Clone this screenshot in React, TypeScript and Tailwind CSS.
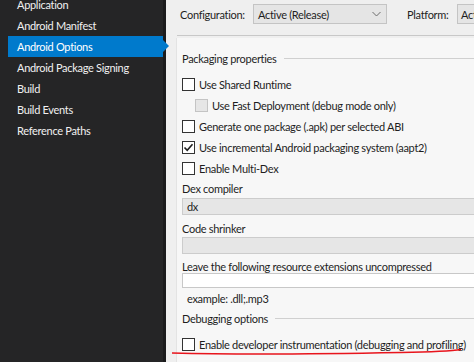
import React from "react";

const font = { fontFamily: 'Lato, "Noto Sans", sans-serif' };

function Check({ checked = false, disabled = false }: { checked?: boolean; disabled?: boolean }) {
  return (
    <span
      className={
        "relative inline-block w-[13px] h-[13px] shrink-0 border " +
        (disabled ? "border-[#c4c4c4] bg-[#e6e6e6]" : "border-[#333333] bg-white")
      }
    >
      {checked && (
        <svg viewBox="0 0 13 13" className="absolute -left-px -top-px w-[13px] h-[13px]">
          <path d="M2.5 6.5 L5.2 9.3 L10.5 3.2" fill="none" stroke="#1e1e1e" strokeWidth="1.6" />
        </svg>
      )}
    </span>
  );
}

function CheckRow({ label, checked, disabled, indent }: { label: string; checked?: boolean; disabled?: boolean; indent?: boolean }) {
  return (
    <div className={"flex items-center h-[21px] gap-[4px] whitespace-nowrap " + (indent ? "pl-[13px]" : "")}>
      <Check checked={checked} disabled={disabled} />
      <span className="text-[#1e1e1e]">{label}</span>
    </div>
  );
}

function Section({ label }: { label: string }) {
  return (
    <div className="flex items-center h-[18px] gap-[7px]">
      <span className="whitespace-nowrap">{label}</span>
      <div className="flex-1 h-px bg-[#d0d0d0]" />
    </div>
  );
}

const navItems = [
  "Application",
  "Android Manifest",
  "Android Options",
  "Android Package Signing",
  "Build",
  "Build Events",
  "Reference Paths",
];

export default function App() {
  return (
    <div className="w-[474px] h-[362px] overflow-hidden flex text-[11px] leading-none tracking-[-0.3px]" style={font}>
      {/* Sidebar */}
      <div className="w-[163px] shrink-0 bg-[#252526] flex flex-col pl-[8px] -mt-[6px] h-[368px]">
        {navItems.map((n) => {
          const sel = n === "Android Options";
          return (
            <div
              key={n}
              className={
                "relative h-[21px] flex items-center pl-[9px] whitespace-nowrap " +
                (sel ? "bg-[#007acc] text-white" : "text-[#f1f1f1]")
              }
            >
              {n}
              {sel && (
                <span className="absolute right-[-6px] top-[4px] w-0 h-0 border-y-[6px] border-y-transparent border-l-[6px] border-l-[#007acc]" />
              )}
            </div>
          );
        })}
      </div>
      <div className="w-[3px] shrink-0 bg-[#1b1b1c]" />
      {/* Main */}
      <div className="flex-1 bg-[#efefef] flex flex-col text-[#1e1e1e] min-w-0">
        {/* Header */}
        <div className="h-[38px] flex flex-col pl-[14px] pt-[4px]">
          <div className="flex items-center h-[20px] whitespace-nowrap">
            <span className="w-[73px]">Configuration:</span>
            <div className="w-[134px] h-[20px] border border-[#c4c4c4] bg-[#e5e5e5] flex items-center pl-[4px] pr-[5px]">
              <span className="flex-1">Active (Release)</span>
              <svg width="9" height="6" viewBox="0 0 9 6">
                <path d="M0.5 1 L4.5 5 L8.5 1" fill="none" stroke="#6d6d6d" strokeWidth="1" />
              </svg>
            </div>
            <span className="ml-[20px] w-[50px]">Platform:</span>
            <div className="flex-1 h-[20px] border border-r-0 border-[#c4c4c4] bg-[#e5e5e5] flex items-center pl-[3px] overflow-hidden">
              Active
            </div>
          </div>
          <div className="h-px bg-[#c8c8c8] mt-[11px] -ml-[3px]" />
        </div>
        {/* Panel */}
        <div className="flex-1 pl-[10px] relative">
          <div className="h-full bg-[#f7f7f7] border-l border-[#e3e3e3] pl-[5px] pt-[11px] flex flex-col">
            <Section label="Packaging properties" />
            <div className="mt-[7px]" />
            <CheckRow label="Use Shared Runtime" />
            <CheckRow label="Use Fast Deployment (debug mode only)" disabled indent />
            <CheckRow label="Generate one package (.apk) per selected ABI" />
            <CheckRow label="Use incremental Android packaging system (aapt2)" checked />
            <CheckRow label="Enable Multi-Dex" />
            <div className="h-[16px] flex items-center mt-[1px]">Dex compiler</div>
            <div className="mt-[2px] h-[17px] border border-r-0 border-[#cccccc] bg-[#e6e6e6] flex items-center pl-[4px]">dx</div>
            <div className="h-[16px] flex items-center mt-[5px]">Code shrinker</div>
            <div className="mt-[1px] h-[17px] border border-r-0 border-[#cccccc] bg-[#e6e6e6]" />
            <div className="h-[14px] flex items-center mt-[5px] whitespace-nowrap">Leave the following resource extensions uncompressed</div>
            <div className="h-[15px] border border-r-0 border-[#c8c8c8] bg-white" />
            <div className="h-[18px] flex items-center pl-[5px] mt-[1px]">example: .dll;.mp3</div>
            <div className="mt-[2px]">
              <Section label="Debugging options" />
            </div>
            <div className="mt-[7px]" />
            <CheckRow label="Enable developer instrumentation (debugging and profiling)" />
          </div>
          <svg className="absolute left-[5px] top-[309px]" width="292" height="10" viewBox="0 0 292 10">
            <path d="M1 6 C 60 7.5, 150 7, 230 5.5 C 260 5, 278 4.5, 290 2.5" fill="none" stroke="#e8141c" strokeWidth="1.4" />
          </svg>
        </div>
      </div>
    </div>
  );
}
